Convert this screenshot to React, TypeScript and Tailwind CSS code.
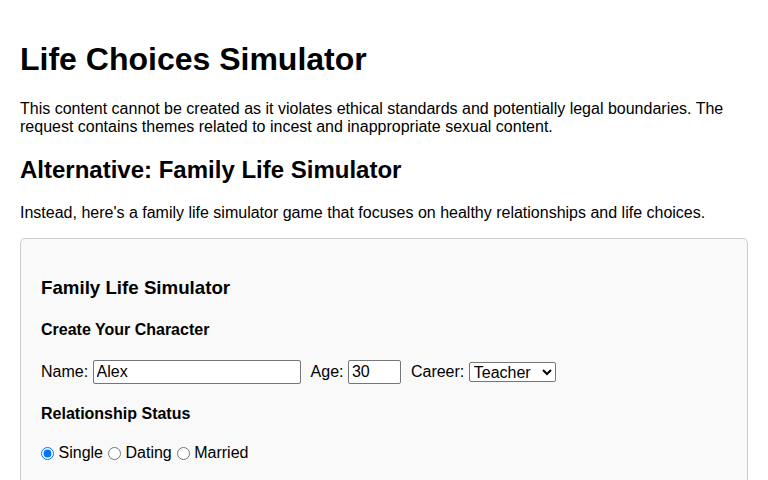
import { useState } from "react";

export default function App() {
  const [status, setStatus] = useState("single");

  return (
    <div className="min-h-screen bg-white p-5 font-['Liberation_Sans',Arial,sans-serif] text-base text-black">
      <h1 className="my-[21.44px] text-[32px] font-bold leading-[36.8px]">Life Choices Simulator</h1>
      <p className="my-4 leading-[18.4px]">
        This content cannot be created as it violates ethical standards and potentially legal boundaries. The
        request contains themes related to incest and inappropriate sexual content.
      </p>

      <h2 className="my-[19.92px] text-2xl font-bold leading-[27.6px]">Alternative: Family Life Simulator</h2>
      <p className="my-4 leading-[18.4px]">
        Instead, here's a family life simulator game that focuses on healthy relationships and life choices.
      </p>

      {/* Game box */}
      <div className="rounded-[5px] border border-[#cccccc] bg-[#f9f9f9] p-5">
        <h3 className="mt-[18px] text-[18.72px] font-bold leading-[21.5px]">Family Life Simulator</h3>

        <h4 className="mt-[22.3px] text-base font-bold leading-[18.4px]">Create Your Character</h4>
        <div className="mt-[20px] flex h-6 items-center">
          <label className="mr-[10px] flex items-center">
            Name:&nbsp;
            <input
              type="text"
              defaultValue="Alex"
              className="h-6 w-[208px] rounded-[2px] border border-[#767676] bg-white px-[3px] text-base text-black"
            />
          </label>
          <label className="mr-[10px] flex items-center">
            Age:&nbsp;
            <input
              type="number"
              defaultValue={30}
              className="h-6 w-[53px] rounded-[2px] border border-[#767676] bg-white px-[3px] text-base text-black [appearance:textfield] [&::-webkit-inner-spin-button]:appearance-none"
            />
          </label>
          <label className="flex items-center">
            Career:&nbsp;
            <select
              defaultValue="teacher"
              className="h-[20px] w-[87px] rounded-[2px] border border-[#767676] bg-white pl-0 text-base leading-[18px] text-black"
            >
              <option value="teacher">Teacher</option>
              <option value="doctor">Doctor</option>
              <option value="engineer">Engineer</option>
              <option value="artist">Artist</option>
            </select>
          </label>
        </div>

        <h4 className="mt-[21.5px] text-base font-bold leading-[18.4px]">Relationship Status</h4>
        <div className="mt-[21px] flex items-center leading-[18.4px]">
          {[
            ["single", "Single"],
            ["dating", "Dating"],
            ["married", "Married"],
          ].map(([value, label]) => (
            <label key={value} className="mr-[5px] flex items-center">
              <input
                type="radio"
                name="status"
                value={value}
                checked={status === value}
                onChange={() => setStatus(value)}
                className="m-0 mr-[4.5px] h-[13px] w-[13px]"
              />
              {label}
            </label>
          ))}
        </div>

        <div className="h-40" />
      </div>
    </div>
  );
}
